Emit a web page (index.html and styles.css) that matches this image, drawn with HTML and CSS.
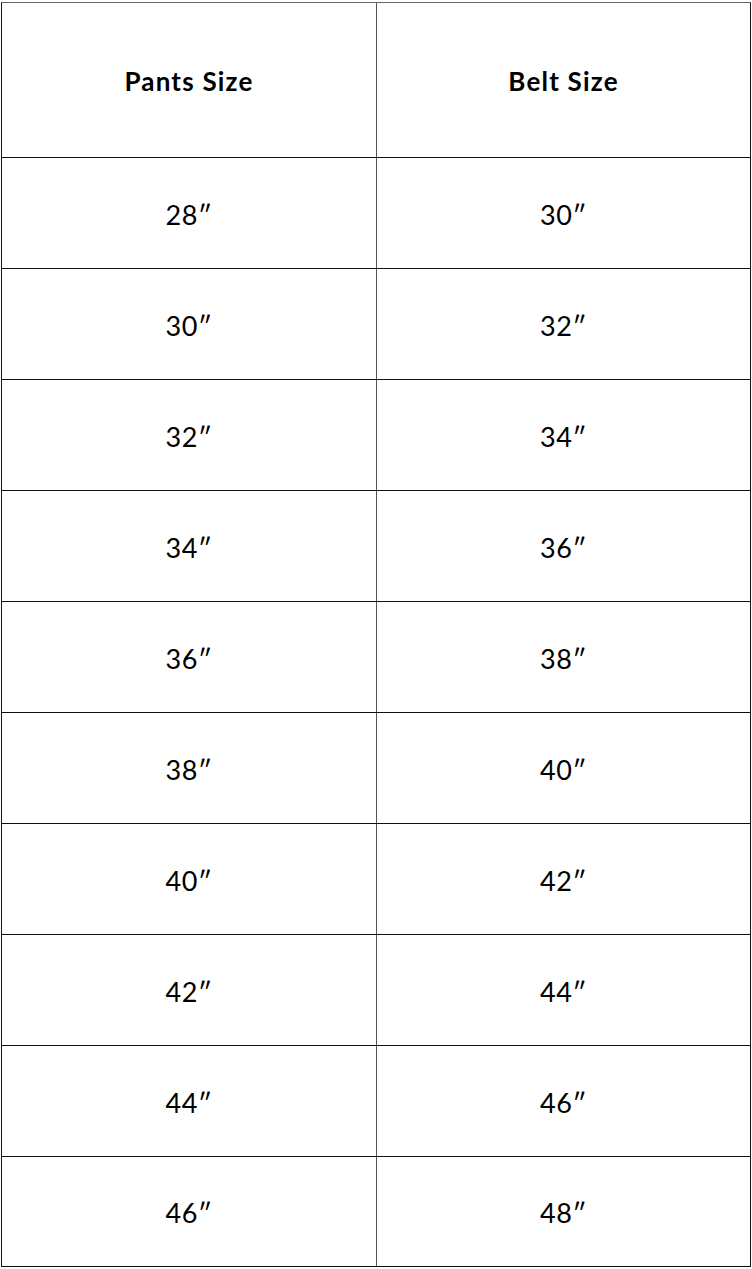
FILE: index.html
```html
<!DOCTYPE html>
<html lang="en">
<head>
<meta charset="utf-8">
<title>Belt Size Chart</title>
<link rel="stylesheet" href="styles.css">
</head>
<body>
<div class="chart">
  <div class="row head"><div class="cell">Pants Size</div><div class="cell">Belt Size</div></div>
  <div class="row"><div class="cell">28″</div><div class="cell">30″</div></div>
  <div class="row"><div class="cell">30″</div><div class="cell">32″</div></div>
  <div class="row"><div class="cell">32″</div><div class="cell">34″</div></div>
  <div class="row"><div class="cell">34″</div><div class="cell">36″</div></div>
  <div class="row"><div class="cell">36″</div><div class="cell">38″</div></div>
  <div class="row"><div class="cell">38″</div><div class="cell">40″</div></div>
  <div class="row"><div class="cell">40″</div><div class="cell">42″</div></div>
  <div class="row"><div class="cell">42″</div><div class="cell">44″</div></div>
  <div class="row"><div class="cell">44″</div><div class="cell">46″</div></div>
  <div class="row last"><div class="cell">46″</div><div class="cell">48″</div></div>
</div>
</body>
</html>
```
FILE: styles.css
```css
html, body {
  margin: 0;
  padding: 0;
  background: #fff;
}
body {
  padding: 2px 0 0 1px;
  font-family: Lato, "Liberation Sans", sans-serif;
  color: #000;
}
.chart {
  width: 750px;
  box-sizing: border-box;
  border-left: 1px solid #111;
  border-right: 1px solid #111;
  border-top: 1px solid #666;
  display: flex;
  flex-direction: column;
}
.row {
  display: grid;
  grid-template-columns: 374px 374px;
  height: 111px;
  border-bottom: 1px solid #111;
  box-sizing: border-box;
}
.row.head {
  height: 155px;
}
.row.last {
  height: 110px;
}
.cell {
  display: flex;
  align-items: center;
  justify-content: center;
  font-size: 27px;
  font-weight: 400;
  letter-spacing: 0.5px;
  padding-top: 2px;
}
.cell + .cell {
  border-left: 1px solid #555;
}
.head .cell {
  font-weight: 700;
  font-size: 26px;
  letter-spacing: 1.2px;
  padding-top: 1px;
}
```
